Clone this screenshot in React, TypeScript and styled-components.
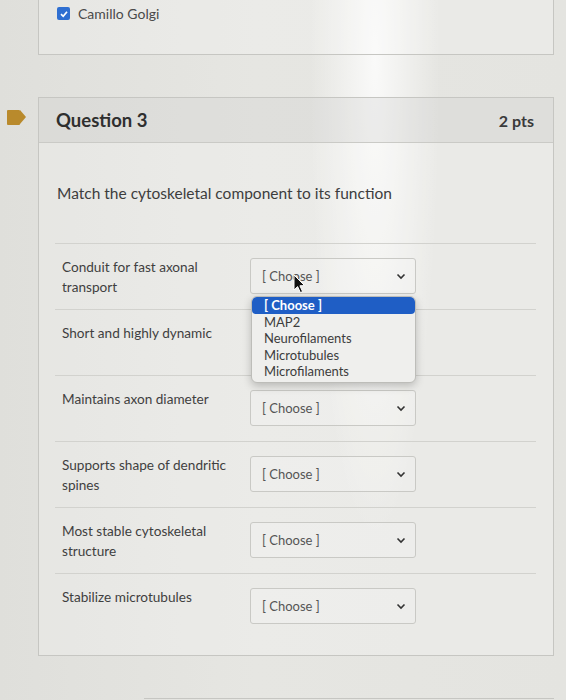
import styled, { createGlobalStyle } from "styled-components";

const GlobalStyle = createGlobalStyle`
  body {
    margin: 0;
    background-color: #e3e3df;
    background-image:
      radial-gradient(ellipse 65px 480px at 375px 60px, rgba(255, 255, 255, 0.8), rgba(255, 255, 255, 0) 100%),
      linear-gradient(90deg, #dfdfdb 0%, #e6e6e2 45%, #e4e4e0 100%);
    background-repeat: no-repeat;
    font-family: Lato, "Open Sans", "Liberation Sans", sans-serif;
    color: #3b3b3b;
  }
`;

const Page = styled.div`
  width: 566px;
  height: 700px;
  overflow: hidden;
  padding: 0 12px 0 38px;
  box-sizing: border-box;
`;

const AnswerPanel = styled.div`
  height: 55px;
  border: 1px solid #c6c6c2;
  border-top: none;
  box-sizing: border-box;
  padding: 5px 0 0 18px;
  background: rgba(255, 255, 255, 0.22);
`;

const CheckRow = styled.label`
  display: flex;
  align-items: center;
  gap: 8px;
  font-size: 14px;
  color: #4a4a4a;
`;

const CheckBox = styled.span`
  width: 13px;
  height: 13px;
  border-radius: 2px;
  background: #2f6fd1;
  display: flex;
  align-items: center;
  justify-content: center;
`;

const QuestionWrap = styled.div`
  position: relative;
  margin-top: 42px;
`;

const Flag = styled.div`
  position: absolute;
  left: -31px;
  top: 13px;
  width: 13px;
  height: 15px;
  background: #b98a2c;
  border-radius: 1px;
  &::after {
    content: "";
    position: absolute;
    left: 13px;
    top: 0;
    border-top: 7.5px solid transparent;
    border-bottom: 7.5px solid transparent;
    border-left: 6px solid #b98a2c;
  }
`;

const QuestionPanel = styled.div`
  border: 1px solid #c6c6c2;
  background: rgba(255, 255, 255, 0.22);
  height: 559px;
  box-sizing: border-box;
`;

const Header = styled.div`
  height: 44px;
  display: flex;
  align-items: center;
  justify-content: space-between;
  padding: 0 19px 0 17px;
  background: rgba(0, 0, 0, 0.05);
  border-bottom: 1px solid #cacac6;
`;

const QuestionTitle = styled.h2`
  margin: 0;
  font-size: 18.5px;
  font-weight: 700;
  color: #2f2f2f;
`;

const Points = styled.span`
  font-size: 16px;
  font-weight: 700;
  color: #3a3a3a;
`;

const Body = styled.div`
  padding: 40px 17px 0 16px;
`;

const Prompt = styled.p`
  margin: 0 0 40px 2px;
  font-size: 15.5px;
  line-height: 20px;
  color: #3d3d3d;
`;

const MatchRow = styled.div`
  position: relative;
  height: 66px;
  box-sizing: border-box;
  border-top: 1px solid #d2d2ce;
  padding: 13px 0 0 7px;
  display: grid;
  grid-template-columns: 170px 166px;
  column-gap: 18px;
  align-items: start;
`;

const RowLabel = styled.div`
  font-size: 13.6px;
  line-height: 20px;
  color: #3f3f3f;
`;

const Select = styled.div<{ $covered?: boolean }>`
  margin-top: 1px;
  height: 36px;
  box-sizing: border-box;
  border: 1px solid #c9c9c5;
  border-radius: 3px;
  background: rgba(255, 255, 255, 0.18);
  display: flex;
  align-items: center;
  justify-content: space-between;
  padding: 0 9px 0 11px;
  font-size: 13px;
  color: #555;
  visibility: ${(p) => (p.$covered ? "hidden" : "visible")};
`;

const OptionList = styled.ul`
  position: absolute;
  left: 196px;
  top: 52px;
  z-index: 2;
  width: 165px;
  box-sizing: border-box;
  margin: 0;
  padding: 0 0 2px;
  list-style: none;
  background: #efefed;
  border: 1px solid #bdbdb9;
  border-radius: 6px;
  box-shadow: 0 3px 8px rgba(0, 0, 0, 0.22);
  overflow: hidden;
`;

const Option = styled.li<{ $active?: boolean }>`
  height: 16.5px;
  line-height: 16.5px;
  padding-left: 12px;
  font-size: 13px;
  border-radius: ${(p) => (p.$active ? "4px" : "0")};
  background: ${(p) => (p.$active ? "#1f5ec5" : "transparent")};
  color: ${(p) => (p.$active ? "#ffffff" : "#3c3c3c")};
  font-weight: ${(p) => (p.$active ? 700 : 400)};
`;

const Pointer = styled.svg`
  position: absolute;
  left: 238px;
  top: 30px;
  z-index: 3;
`;

const NextPanel = styled.div`
  margin: 42px 0 0 106px;
  border-top: 1px solid #c6c6c2;
  height: 4px;
`;

const rows = [
  "Conduit for fast axonal transport",
  "Short and highly dynamic",
  "Maintains axon diameter",
  "Supports shape of dendritic spines",
  "Most stable cytoskeletal structure",
  "Stabilize microtubules",
];

const options = ["[ Choose ]", "MAP2", "Neurofilaments", "Microtubules", "Microfilaments"];

function Chevron() {
  return (
    <svg width="10" height="7" viewBox="0 0 10 7">
      <path d="M1.5 1.5 L5 5 L8.5 1.5" fill="none" stroke="#333" strokeWidth="1.6" />
    </svg>
  );
}

export default function App() {
  return (
    <>
      <GlobalStyle />
      <Page>
        <AnswerPanel>
          <CheckRow>
            <CheckBox>
              <svg width="10" height="10" viewBox="0 0 10 10">
                <path d="M2 5.2 L4.2 7.3 L8 2.8" fill="none" stroke="#fff" strokeWidth="1.7" />
              </svg>
            </CheckBox>
            Camillo Golgi
          </CheckRow>
        </AnswerPanel>

        <QuestionWrap>
          <Flag />
          <QuestionPanel>
            <Header>
              <QuestionTitle>Question 3</QuestionTitle>
              <Points>2 pts</Points>
            </Header>
            <Body>
              <Prompt>Match the cytoskeletal component to its function</Prompt>
              {rows.map((label, i) => (
                <MatchRow key={label}>
                  <RowLabel>{label}</RowLabel>
                  {/* the open list of the first row hides the second row's select */}
                  <Select $covered={i === 1}>
                    <span>[ Choose ]</span>
                    <Chevron />
                  </Select>
                  {i === 0 && (
                    <>
                      <Pointer width="13" height="20" viewBox="0 0 13 20">
                        <path
                          d="M1 1 L1 16 L4.6 12.6 L7.4 18.6 L9.6 17.6 L6.9 11.8 L11.6 11.6 Z"
                          fill="#111"
                          stroke="#fff"
                          strokeWidth="1"
                        />
                      </Pointer>
                      <OptionList>
                        {options.map((o, j) => (
                          <Option key={o} $active={j === 0}>
                            {o}
                          </Option>
                        ))}
                      </OptionList>
                    </>
                  )}
                </MatchRow>
              ))}
            </Body>
          </QuestionPanel>
        </QuestionWrap>
        <NextPanel />
      </Page>
    </>
  );
}
